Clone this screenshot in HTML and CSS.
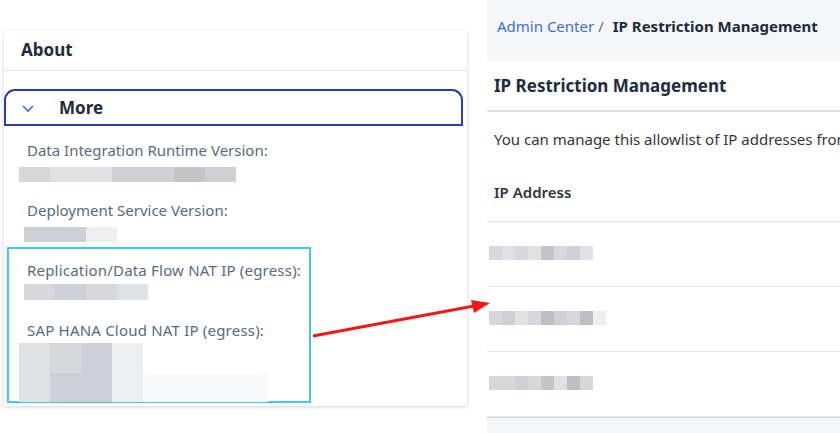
FILE: index.html
```html
<!DOCTYPE html>
<html lang="en">
<head>
    <meta charset="UTF-8">
    <meta name="viewport" content="width=device-width, initial-scale=1.0">
    <title>About - IP Restriction Management</title>
    <link rel="stylesheet" href="styles.css">
</head>
<body>
    <div class="left">
        <div class="card">
            <div class="card-head">About</div>
            <div class="card-body">
                <div class="more">
                    <svg class="chevron" width="12" height="8" viewBox="0 0 12 8">
                        <path d="M1.5 1.5 L6 6 L10.5 1.5" fill="none" stroke="#3b6fd6" stroke-width="1.6" stroke-linecap="round"/>
                    </svg>
                    <span>More</span>
                </div>

                <div class="label first">Data Integration Runtime Version:</div>
                <div class="blur bar-runtime">
                    <i class="s2"></i><i class="s1"></i><i class="s1"></i><i class="s3"></i><i class="s3"></i><i class="s5"></i><i class="s3"></i>
                </div>

                <div class="label">Deployment Service Version:</div>
                <div class="blur bar-deploy">
                    <i class="s3"></i><i class="s3"></i><i class="s0"></i>
                </div>

                <div class="highlight">
                    <div class="label wide">Replication/Data Flow NAT IP (egress):</div>
                    <div class="blur bar-repl">
                        <i class="s2"></i><i class="s3"></i><i class="s2"></i><i class="s1"></i>
                    </div>

                    <div class="label wide">SAP HANA Cloud NAT IP (egress):</div>
                    <div class="blur-big">
                        <div class="blur-col"><i class="s1"></i><i class="s1"></i></div>
                        <div class="blur-col"><i class="s2"></i><i class="s3"></i></div>
                        <div class="blur-col"><i class="s3"></i><i class="s3"></i></div>
                        <div class="blur-col"><i class="s0"></i><i class="s0"></i></div>
                        <div class="blur-tail"></div>
                    </div>
                </div>
            </div>
        </div>
    </div>

    <div class="right">
        <div class="breadcrumb">
            <a class="crumb-link">Admin Center</a><span class="crumb-sep">/</span><span class="crumb-current">IP Restriction Management</span>
        </div>
        <div class="page">
            <h2 class="page-title">IP Restriction Management</h2>
            <p class="page-desc">You can manage this allowlist of IP addresses from</p>
            <div class="table-head">IP Address</div>
            <div class="row">
                <div class="blur">
                    <i class="s2"></i><i class="s1"></i><i class="s2"></i><i class="s1"></i><i class="s5"></i><i class="s2"></i><i class="s3"></i><i class="s1"></i>
                </div>
            </div>
            <div class="row">
                <div class="blur">
                    <i class="s2"></i><i class="s3"></i><i class="s1"></i><i class="s2"></i><i class="s4"></i><i class="s3"></i><i class="s2"></i><i class="s4"></i><i class="s0"></i>
                </div>
            </div>
            <div class="row">
                <div class="blur">
                    <i class="s2"></i><i class="s2"></i><i class="s3"></i><i class="s2"></i><i class="s5"></i><i class="s1"></i><i class="s4"></i><i class="s2"></i>
                </div>
            </div>
            <div class="page-foot"></div>
        </div>
    </div>

    <svg class="arrow" width="840" height="433" viewBox="0 0 840 433">
        <line x1="313" y1="336" x2="474" y2="306" stroke="#f01818" stroke-width="3"/>
        <polygon points="490,303 471,300 474,313" fill="#f01818"/>
    </svg>
</body>
</html>
```

FILE: styles.css
```css
:root {
    --text: #32363a;
    --title: #1d2d3e;
    --label: #556b82;
    --link: #3b6fd6;
    --line: #e4e6e9;
    --shell: #f5f6f7;
}

* {
    box-sizing: border-box;
}

body {
    margin: 0;
    width: 840px;
    height: 433px;
    overflow: hidden;
    display: flex;
    background: #fff;
    font-family: 'Noto Sans', 'Open Sans', sans-serif;
    color: var(--text);
    position: relative;
}

/* left: about card */

.left {
    width: 487px;
    flex-shrink: 0;
    padding: 31px 0 0 4px;
}

.card {
    width: 463px;
    height: 375px;
    background: #fff;
    box-shadow: 0 1px 4px rgba(0, 0, 0, 0.18);
}

.card-head {
    height: 40px;
    padding: 0 0 3px 17px;
    display: flex;
    align-items: center;
    border-bottom: 1px solid #e2e2e2;
    font-size: 17px;
    font-weight: 700;
    color: var(--title);
}

.card-body {
    padding-top: 18px;
}

.more {
    height: 37px;
    margin-right: 4px;
    border: 2px solid #2b3fa8;
    border-radius: 11px 11px 0 0;
    display: flex;
    align-items: center;
    padding-left: 16px;
    font-size: 17px;
    font-weight: 700;
    color: var(--title);
}

.more span {
    margin-left: 25px;
}

.chevron {
    margin-top: 2px;
}

.label {
    padding-left: 23px;
    font-size: 15px;
    line-height: 20px;
    color: var(--label);
    white-space: nowrap;
}

.label.first {
    margin-top: 14px;
}

.label.wide {
    letter-spacing: 0.2px;
}

.blur {
    display: flex;
    height: 15px;
}

.blur i {
    display: block;
    width: 31px;
    height: 100%;
}

.s0 { background: #eceef0; }
.s1 { background: #dfe2e5; }
.s2 { background: #d6d8db; }
.s3 { background: #cdd0d4; }
.s4 { background: #bcc0c6; }
.s5 { background: #c3c5c9; }

.bar-runtime {
    margin: 7px 0 18px 15px;
}

.bar-deploy {
    margin: 7px 0 0 20px;
}

.highlight {
    width: 304px;
    height: 156px;
    margin: 5px 0 0 3px;
    border: 2px solid #45c4ee;
    padding-top: 11px;
}

.highlight .label {
    padding-left: 18px;
}

.bar-repl {
    height: 16px;
    margin: 4px 0 20px 15px;
}

.blur-big {
    display: flex;
    height: 59px;
    margin: 3px 0 0 10px;
}

.blur-col {
    width: 31px;
    display: flex;
    flex-direction: column;
}

.blur-col i {
    display: block;
    flex: 1;
}

.blur-tail {
    width: 125px;
    height: 29px;
    margin-top: 30px;
    background: #f7f9fb;
}

/* right: ip restriction page */

.right {
    flex: 1;
    overflow: hidden;
    white-space: nowrap;
    display: flex;
    flex-direction: column;
}

.breadcrumb {
    height: 61px;
    background: var(--shell);
    padding: 16px 0 0 10px;
    font-size: 15px;
    line-height: 20px;
}

.crumb-link {
    color: var(--link);
}

.crumb-sep {
    color: #6a6d70;
    margin: 0 9px 0 4px;
}

.crumb-current {
    font-weight: 700;
    color: var(--title);
}

.page {
    flex: 1;
    display: flex;
    flex-direction: column;
}

.page-title {
    margin: 0;
    height: 51px;
    padding: 13px 0 0 7px;
    font-size: 17px;
    line-height: 24px;
    font-weight: 700;
    color: var(--title);
    border-bottom: 2px solid #dcdfe3;
}

.page-desc {
    margin: 0;
    padding: 17px 0 0 7px;
    height: 58px;
    font-size: 15px;
    line-height: 20px;
}

.table-head {
    height: 52px;
    padding: 12px 0 0 7px;
    font-size: 15px;
    line-height: 20px;
    font-weight: 600;
    border-bottom: 1px solid var(--line);
}

.row {
    height: 65px;
    padding: 24px 0 0 2px;
    border-bottom: 1px solid var(--line);
}

.row .blur {
    height: 14px;
}

.row .blur i {
    width: 13px;
}

.page-foot {
    flex: 1;
    background: var(--shell);
    border-top: 1px solid #d5d9de;
}

/* annotation arrow over both panels */

.arrow {
    position: absolute;
    left: 0;
    top: 0;
    pointer-events: none;
}
```
